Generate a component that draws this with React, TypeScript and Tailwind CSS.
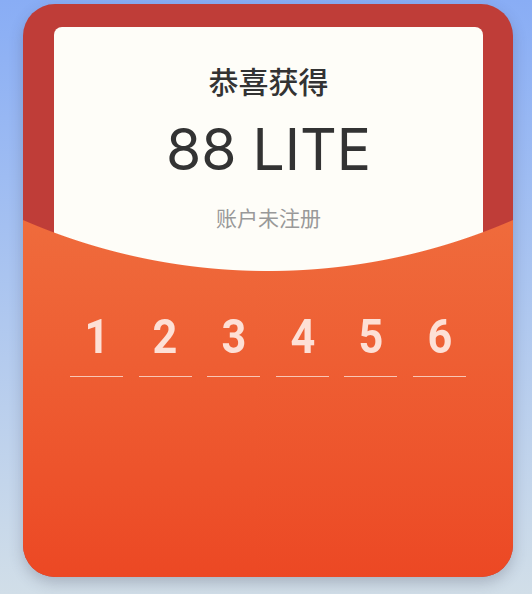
import React from "react";

export default function App() {
  const digits = ["1", "2", "3", "4", "5", "6"];
  return (
    <div className="w-full h-[594px] overflow-hidden bg-gradient-to-b from-[#89adf5] to-[#d1dee8] pt-[4px]">
      <div className="relative ml-[23px] w-[490px] h-[573px] rounded-[32px] overflow-hidden bg-[#bf3d38] shadow-[0_6px_14px_rgba(60,60,80,0.25)]">
        <div className="ml-[31px] mt-[23px] w-[429px] h-[300px] rounded-[8px] bg-[#fefdf8] flex flex-col items-center pt-[38px]">
          <div
            className="text-[30px] leading-[30px] font-medium text-[#333333]"
            style={{ fontFamily: '"Noto Sans CJK SC", "Noto Sans", sans-serif' }}
          >
            恭喜获得
          </div>
          <div
            className="mt-[26px] text-[57px] leading-[57px] font-normal text-[#333333]"
            style={{ fontFamily: 'Inter, "Noto Sans", sans-serif' }}
          >
            88 LITE
          </div>
          <div
            className="mt-[28px] text-[21px] leading-[22px] text-[#999999]"
            style={{ fontFamily: '"Noto Sans CJK SC", "Noto Sans", sans-serif' }}
          >
            账户未注册
          </div>
        </div>
        <div className="absolute left-0 right-0 top-[216px] bottom-0 bg-gradient-to-b from-[#ef6b3c] to-[#ec4824] [mask-image:radial-gradient(circle_614px_at_50%_-563px,transparent_613.5px,#000_614.5px)]">
          <div className="mx-auto mt-[93px] w-[396px] grid grid-cols-6 gap-[15.6px]">
            {digits.map((d) => (
              <div
                key={d}
                className="flex justify-center pb-[15px] border-b-[1.5px] border-[#f9c6b5]"
              >
                <span
                  className="inline-block scale-x-90 text-[48px] leading-[48px] font-bold text-[#fde0d6]"
                  style={{ fontFamily: 'Roboto, "Noto Sans", sans-serif' }}
                >
                  {d}
                </span>
              </div>
            ))}
          </div>
        </div>
      </div>
    </div>
  );
}
